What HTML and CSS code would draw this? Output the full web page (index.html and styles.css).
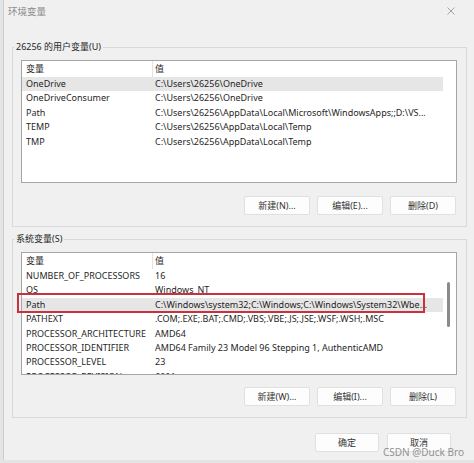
FILE: index.html
```html
<!doctype html>
<html lang="zh-CN">

<head>
    <meta charset="utf-8">
    <title>环境变量</title>
    <link rel="stylesheet" href="styles.css">
</head>

<body>
    <div class="window">
        <div class="titlebar">
            <span class="title">环境变量</span>
            <svg class="close" viewBox="0 0 8 8">
                <path d="M0.5 0.5 L7.5 7.5 M7.5 0.5 L0.5 7.5" />
            </svg>
        </div>

        <!-- user variables -->
        <fieldset class="group">
            <legend>26256 的用户变量(U)</legend>
            <div class="listbox">
                <div class="rows">
                    <div class="list-head"><span class="name">变量</span><span class="value">值</span></div>
                    <div class="row selected"><span class="name">OneDrive</span><span class="value">C:\Users\26256\OneDrive</span></div>
                    <div class="row"><span class="name">OneDriveConsumer</span><span class="value">C:\Users\26256\OneDrive</span></div>
                    <div class="row"><span class="name">Path</span><span class="value">C:\Users\26256\AppData\Local\Microsoft\WindowsApps;;D:\VS...</span></div>
                    <div class="row"><span class="name">TEMP</span><span class="value">C:\Users\26256\AppData\Local\Temp</span></div>
                    <div class="row"><span class="name">TMP</span><span class="value">C:\Users\26256\AppData\Local\Temp</span></div>
                </div>
            </div>
            <div class="btn-row">
                <button class="btn">新建(N)...</button>
                <button class="btn">编辑(E)...</button>
                <button class="btn">删除(D)</button>
            </div>
        </fieldset>

        <!-- system variables -->
        <fieldset class="group group-system">
            <legend>系统变量(S)</legend>
            <div class="listbox">
                <div class="rows">
                    <div class="list-head"><span class="name">变量</span><span class="value">值</span></div>
                    <div class="row"><span class="name">NUMBER_OF_PROCESSORS</span><span class="value">16</span></div>
                    <div class="row"><span class="name">OS</span><span class="value">Windows_NT</span></div>
                    <div class="row selected"><span class="name">Path</span><span class="value">C:\Windows\system32;C:\Windows;C:\Windows\System32\Wbe...</span></div>
                    <div class="row"><span class="name">PATHEXT</span><span class="value">.COM;.EXE;.BAT;.CMD;.VBS;.VBE;.JS;.JSE;.WSF;.WSH;.MSC</span></div>
                    <div class="row"><span class="name">PROCESSOR_ARCHITECTURE</span><span class="value">AMD64</span></div>
                    <div class="row"><span class="name">PROCESSOR_IDENTIFIER</span><span class="value">AMD64 Family 23 Model 96 Stepping 1, AuthenticAMD</span></div>
                    <div class="row"><span class="name">PROCESSOR_LEVEL</span><span class="value">23</span></div>
                    <div class="row"><span class="name">PROCESSOR_REVISION</span><span class="value">6001</span></div>
                </div>
                <div class="scroll-thumb"></div>
                <div class="mark"></div>
            </div>
            <div class="btn-row">
                <button class="btn">新建(W)...</button>
                <button class="btn">编辑(I)...</button>
                <button class="btn">删除(L)</button>
            </div>
        </fieldset>

        <div class="footer">
            <button class="btn btn-wide">确定</button>
            <button class="btn btn-wide">取消</button>
        </div>

        <span class="watermark">CSDN @Duck Bro</span>
    </div>
</body>

</html>
```

FILE: styles.css
```css
/* base */

* {
    box-sizing: border-box;
}

body {
    margin: 0;
    background: #e4e4e4;
    font-family: "Noto Sans", "Noto Sans CJK SC", sans-serif;
    font-size: 9px;
    color: #1f1f1f;
}

.window {
    position: relative;
    display: flex;
    flex-direction: column;
    height: 460px;
    margin-left: 3px;
    background: #f0f0f0;
    border-left: 1px solid #cdcdcd;
}

/* title bar */
.titlebar {
    display: flex;
    justify-content: space-between;
    align-items: flex-start;
    height: 33px;
    padding: 5px 19px 0 4px;
}

.title {
    font-size: 9.5px;
    line-height: 14px;
    color: #8a8a8a;
}

.close {
    width: 8px;
    height: 8px;
    margin-top: 2px;
    fill: none;
    stroke: #9a9a9a;
    stroke-width: 0.9;
}

/* group boxes */
.group {
    min-width: 0;
    margin: 7px 7px 0 8px;
    padding: 6px 9px 11px 8px;
    border: 1px solid #d9d9d9;
}

.group legend {
    margin-left: -7px;
    padding: 0 2px;
    line-height: 14px;
}

.group-system {
    margin-top: 5px;
}

/* list views */
.listbox {
    position: relative;
    height: 123px;
    background: #fff;
    border: 1px solid #a5a5a5;
}

.rows {
    height: 121px;
    overflow: hidden;
}

.list-head {
    display: flex;
    height: 16px;
    line-height: 16px;
    margin-right: 13px;
}

.list-head .value {
    border-left: 1px solid #e3e3e3;
    padding-left: 2px;
}

.row {
    display: flex;
    height: 14.4px;
    line-height: 14.4px;
    margin-right: 13px;
}

.row.selected {
    background: #e6e6e6;
}

.name {
    flex: none;
    width: 130px;
    padding-left: 4px;
    white-space: nowrap;
}

.value {
    flex: 1;
    min-width: 0;
    padding-left: 3px;
    white-space: nowrap;
    overflow: hidden;
    text-overflow: ellipsis;
}

.scroll-thumb {
    position: absolute;
    top: 29px;
    right: 6px;
    width: 3px;
    height: 45px;
    background: #8a8a8a;
    border-radius: 2px;
}

/* red annotation frame around the Path row */
.mark {
    position: absolute;
    top: 40px;
    left: -5px;
    width: 408px;
    height: 20px;
    border: 2px solid #c8323c;
}

/* buttons */
.btn-row {
    display: flex;
    justify-content: flex-end;
    gap: 7px;
    margin-top: 12px;
    padding-right: 1px;
}

.group:first-of-type .btn-row {
    margin-top: 13px;
}

.btn {
    width: 66px;
    height: 19px;
    padding: 0;
    background: #fdfdfd;
    border: 1px solid #e0e0e0;
    border-radius: 2px;
    font: inherit;
    color: #333;
}

.footer {
    display: flex;
    justify-content: flex-end;
    gap: 8px;
    margin-top: 15px;
    padding-right: 23px;
}

.btn-wide {
    width: 64px;
}

.watermark {
    position: absolute;
    right: 10px;
    bottom: 1px;
    font-size: 10px;
    line-height: 14px;
    color: rgba(110, 110, 110, 0.75);
}
```
